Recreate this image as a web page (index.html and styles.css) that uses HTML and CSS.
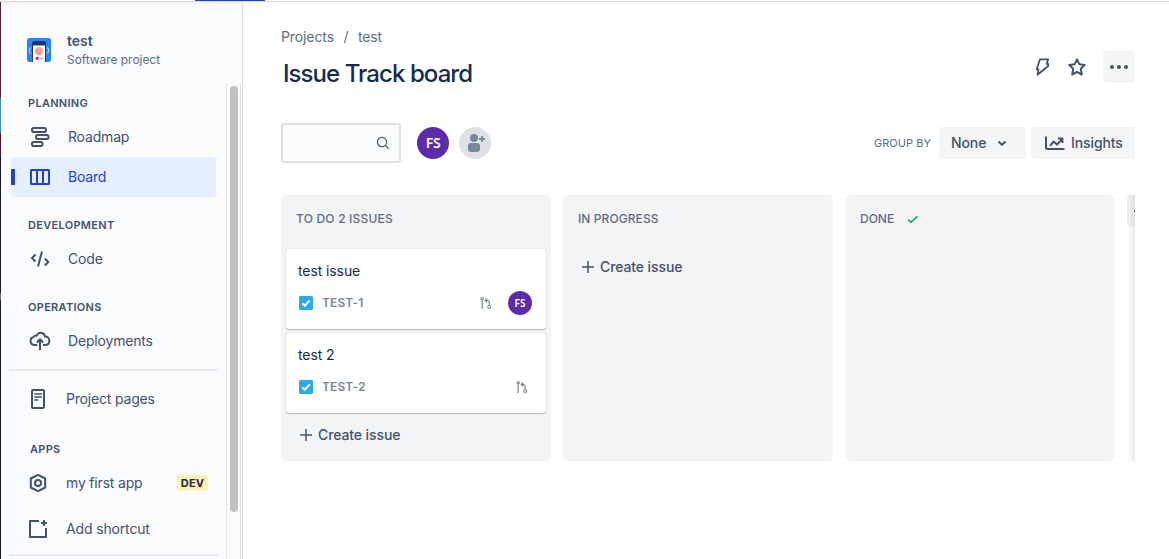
FILE: index.html
```html
<!DOCTYPE html>
<html lang="en">
<head>
<meta charset="utf-8">
<title>Issue Track board</title>
<link rel="stylesheet" href="styles.css">
</head>
<body>
<div class="topbar"><span class="topbar-tab"></span></div>
<div class="app">
  <div class="desktop-edge"></div>
  <aside class="sidebar">
    <header class="project">
      <svg class="project-logo" width="24" height="24" viewBox="0 0 24 24">
        <rect width="24" height="24" rx="2.500" fill="#2684ff"/>
        <path d="M5 24V5.500Q5 3 7.500 3h9Q19 3 19 5.500V24z" fill="#253858"/>
        <path d="M6 7.500h12v16.500h-12z" fill="#fff"/>
        <circle cx="12" cy="13.300" r="4.300" fill="#ffab9b"/>
        <path d="M9.500 12.600h1.500M13 12.600h1.500M10.500 14.500l1.500.8 1.500-.8" stroke="#c4605a" stroke-width=".7" fill="none"/>
        <rect x="8.700" y="19" width="2.800" height="2.800" rx=".5" fill="#f5193d"/>
        <rect x="13" y="19" width="2.800" height="2.800" rx=".5" fill="#a9cdf8"/>
        <path d="M3.700 9.500Q1 12.500 3.700 15.500M20.300 9.500Q23 12.500 20.300 15.500" stroke="#b3d4ff" stroke-width="1.200" fill="none"/>
      </svg>
      <div class="project-text">
        <div class="project-name">test</div>
        <div class="project-type">Software project</div>
      </div>
    </header>
    <div class="nav-scroll">
      <nav class="nav">
        <h2 class="nav-heading">PLANNING</h2>
        <a class="nav-item"><svg class="icon" viewBox="0 0 24 24"><g class="stroke"><rect x="4" y="3" width="14" height="4" rx="1.800"/><rect x="8" y="10" width="12.500" height="4" rx="1.800"/><rect x="4" y="17" width="10.500" height="4" rx="1.800"/></g></svg><span>Roadmap</span></a>
        <a class="nav-item nav-item-active"><svg class="icon" viewBox="0 0 24 24"><rect class="stroke" x="3" y="5" width="18" height="14" rx=".5"/><path class="stroke" d="M9 5v14M15 5v14"/></svg><span>Board</span></a>
        <h2 class="nav-heading gap">DEVELOPMENT</h2>
        <a class="nav-item"><svg class="icon" viewBox="0 0 24 24"><path class="stroke" d="M7.500 7.500L4 11l3.500 3.500M14 4.500L10 19.500M16.800 11.500l3.500 3.500-3.500 3.500"/></svg><span>Code</span></a>
        <h2 class="nav-heading gap">OPERATIONS</h2>
        <a class="nav-item"><svg class="icon" viewBox="0 0 24 24"><path class="stroke" d="M9.200 16H6.500a4 4 0 0 1-.8-7.900C6.500 6.500 8 6.300 8.800 6.600 10 4.200 12 3.500 13.800 4c2 .5 3 2 3.200 3.600 2.500 0 4.300 1.800 4.300 4.200 0 2.500-1.800 4.200-4.200 4.200H15M12 21V10.500M8.800 13.500L12 10.300l3.200 3.200"/></svg><span>Deployments</span></a>
        <hr class="divider">
        <a class="nav-item nudged"><svg class="icon" viewBox="0 0 24 24"><rect class="stroke" x="6" y="3" width="12" height="18" rx="1"/><path class="stroke thin" d="M8.300 7h7.700M8.300 10h7.700M8.300 13h4"/></svg><span>Project pages</span></a>
        <h2 class="nav-heading gap nudged-heading">APPS</h2>
        <a class="nav-item nudged"><svg class="icon" viewBox="0 0 24 24"><path class="stroke" d="M12 3.800l7.200 3.700v9L12 20.200l-7.200-3.700v-9z"/><circle class="stroke" cx="12" cy="12" r="3"/></svg><span>my first app</span><b class="dev">DEV</b></a>
        <a class="nav-item nudged shortcut"><svg class="icon" viewBox="0 0 24 24"><path class="stroke" d="M13 4H4v16h16v-9"/><path class="stroke" d="M18 3v6M15 6h6"/></svg><span>Add shortcut</span></a>
        <hr class="divider last">
      </nav>
      <div class="scrollbar"><div class="thumb"></div></div>
    </div>
  </aside>
  <main class="main">
    <div class="crumbs"><span>Projects</span><span>/</span><span>test</span></div>
    <div class="title-row">
      <h1 class="title">Issue Track board</h1>
      <div class="actions">
        <svg width="20" height="20" viewBox="0 0 20 20"><path class="stroke bolt" d="M8 2.300h8.200l-1.500 4.500h1.500V9L5.500 17.800l1-5.500H4.700z"/></svg>
        <svg width="20" height="20" viewBox="0 0 20 20"><path class="stroke" d="M10 2.300l2.300 4.900 5.500.7-4 3.900 1 5.700L10 14.900l-4.800 2.600 1-5.700-4-3.900 5.500-.7z"/></svg>
        <button class="btn more"><svg width="20" height="6" viewBox="0 0 20 6"><circle cx="3" cy="3" r="2"/><circle cx="10" cy="3" r="2"/><circle cx="17" cy="3" r="2"/></svg></button>
      </div>
    </div>
    <div class="toolbar">
      <div class="search"><svg width="14" height="14" viewBox="0 0 14 14"><circle class="stroke slim" cx="6" cy="6" r="4.600"/><path class="stroke slim" d="M9.400 9.400l3.400 3.400"/></svg></div>
      <span class="avatar"><span>FS</span></span>
      <span class="avatar add"><svg width="20" height="20" viewBox="0 0 20 20"><circle cx="8" cy="5" r="4"/><rect x="2" y="10" width="12" height="9" rx="3"/><path d="M16 3v6M13 6h6" stroke="#7a869a" stroke-width="1.800"/></svg></span>
      <span class="group-label">GROUP BY</span>
      <button class="btn none"><span>None</span><svg width="10" height="8" viewBox="0 0 10 8"><path class="stroke" d="M1.500 2.500L5 5.800l3.500-3.300"/></svg></button>
      <button class="btn insights"><svg width="20" height="16" viewBox="0 0 20 16"><path class="stroke" d="M1 1.500v11q0 1.500 1.500 1.500H19.500M5 10.800l3.500-4.200 3.500 3 5-5.500M12.800 3.500h4.600V8"/></svg><span>Insights</span></button>
    </div>
    <div class="columns">
      <section class="column">
        <h3 class="column-title title-todo">TO DO 2 ISSUES</h3>
        <article class="card">
          <div class="card-title">test issue</div>
          <div class="card-foot"><svg class="task" viewBox="0 0 14 14"><rect width="14" height="14" rx="1.500" fill="#2aa9ec"/><path d="M3.300 7.200l2.500 2.500 4.900-5.300" stroke="#fff" stroke-width="2" fill="none"/></svg><span class="key">TEST-1</span>
            <svg class="pr" viewBox="0 0 14 14"><circle cx="3.200" cy="2.700" r="1.200"/><path d="M3.200 4v9M10.200 9.500V6q0-1.500-1.500-1.500H6.500M8.200 2.500l-2 2 2 2"/><circle cx="10.200" cy="11" r="1.500"/></svg>
            <span class="avatar small"><span>FS</span></span></div>
        </article>
        <article class="card">
          <div class="card-title">test 2</div>
          <div class="card-foot"><svg class="task" viewBox="0 0 14 14"><rect width="14" height="14" rx="1.500" fill="#2aa9ec"/><path d="M3.300 7.200l2.500 2.500 4.900-5.300" stroke="#fff" stroke-width="2" fill="none"/></svg><span class="key">TEST-2</span>
            <svg class="pr pr-end" viewBox="0 0 14 14"><circle cx="3.200" cy="2.700" r="1.200"/><path d="M3.200 4v9M10.200 9.500V6q0-1.500-1.500-1.500H6.500M8.200 2.500l-2 2 2 2"/><circle cx="10.200" cy="11" r="1.500"/></svg></div>
        </article>
        <div class="create"><svg width="12" height="12" viewBox="0 0 12 12"><path d="M6 0v12M0 6h12"/></svg><span>Create issue</span></div>
      </section>
      <section class="column">
        <h3 class="column-title title-progress">IN PROGRESS</h3>
        <div class="create"><svg width="12" height="12" viewBox="0 0 12 12"><path d="M6 0v12M0 6h12"/></svg><span>Create issue</span></div>
      </section>
      <section class="column">
        <h3 class="column-title"><span>DONE</span><svg width="12" height="10" viewBox="0 0 12 10"><path d="M1 5.500l3 2.800 6.500-6" stroke="#00a06b" stroke-width="1.500" fill="none"/></svg></h3>
      </section>
      <div class="add-column"><div class="add-button"><i></i></div></div>
    </div>
  </main>
</div>
</body>
</html>
```

FILE: styles.css
```css
* { box-sizing: border-box; }
body { margin: 0; width: 1169px; height: 559px; overflow: hidden; display: flex; flex-direction: column; background: #fff; color: #42526e; font: 14px/20px Inter, "Liberation Sans", sans-serif; letter-spacing: -.1px; }
h1, h2, h3 { margin: 0; }
svg { flex: none; display: block; }
.stroke { fill: none; stroke: currentColor; stroke-width: 2; stroke-linejoin: round; }
.stroke.thin { stroke-width: 1.700; }
.stroke.slim { stroke-width: 1.200; }
.stroke.bolt { stroke-width: 1.800; }

.topbar { height: 2px; flex: none; padding-left: 195px; border-bottom: 1px solid #d9dbe0; }
.topbar-tab { display: block; width: 70px; height: 1px; background: #1d3fd0; }
.app { flex: 1; min-height: 0; display: flex; }
.desktop-edge { width: 1px; background: linear-gradient(#572429 0 95px, #3b91b1 97px 130px, #57151f 132px 152px, #171525 154px 290px, #777 292px 297px, #101820 299px); }

.sidebar { width: 242px; display: flex; flex-direction: column; background: #fafbfc; border-right: 1px solid #dfe0e4; box-shadow: inset 0 3px 3px -2px #0000000f; }
.project { height: 81px; flex: none; display: flex; gap: 16px; padding: 30px 0 0 26px; }
.project-logo { margin-top: 6px; }
.project-name { font-weight: 600; line-height: 18px; letter-spacing: 0; }
.project-type { padding-top: 1px; font-size: 12px; line-height: 18px; color: #5e6c84; letter-spacing: -.05px; }
.nav-scroll { flex: 1; min-height: 0; display: flex; }
.nav { width: 225px; padding: 10px 10px 0; overflow: hidden; }
.nav-heading { height: 20px; margin-bottom: 4px; padding-left: 17px; font-size: 11px; line-height: 20px; font-weight: 600; letter-spacing: .3px; }
.nav-heading.gap { margin-top: 18px; }
.nav-heading.nudged-heading { margin-top: 20px; padding-left: 19px; }
.nav-item { height: 40px; display: flex; align-items: center; gap: 16px; padding-left: 17px; border-radius: 3px; letter-spacing: -.18px; }
.nav-item > .icon { width: 24px; height: 24px; }
.nav-item-active { color: #1d43cf; background: linear-gradient(#1d43cf, #1d43cf) 0 12px / 4px 16px no-repeat #e5efff; }
.nav-item.nudged { padding-left: 15px; }
.nav-item.shortcut { margin-top: 6px; letter-spacing: -.15px; }
.divider { height: 2px; margin: 8px 0 8px -2px; width: 209px; border: 0; background: #e8eaef; }
.divider.last { margin: 5px 0 0 -2px; }
.dev { width: 31px; height: 16px; margin-left: auto; margin-right: 8px; border-radius: 3px; background: #fff0b3; color: #172b4d; font-size: 11px; line-height: 16px; font-weight: 700; letter-spacing: .2px; text-align: center; }
.scrollbar { width: 15px; border: solid #e4e5e7; border-width: 0 1px; padding: 3px 0 0 3px; }
.thumb { width: 8px; height: 426px; border-radius: 4px; background: #c1c1c1; }

.main { width: 892px; padding: 25px 0 0 38px; }
.crumbs { display: flex; gap: 9.500px; color: #5e6c84; }
.title-row { width: 854px; height: 32px; margin-top: 4px; display: flex; align-items: center; justify-content: space-between; }
.title { padding: 14px 0 0 2px; font-size: 24px; line-height: 32px; font-weight: 500; color: #172b4d; letter-spacing: -.93px; }
.actions { display: flex; align-items: center; gap: 15px; }
.btn { height: 32px; padding: 0; border: 0; border-radius: 3px; background: #f4f5f7; color: #42526e; font: 500 14px/20px Inter, sans-serif; letter-spacing: -.1px; display: flex; align-items: center; }
.more { width: 32px; margin-left: 1px; justify-content: center; }
.more svg { fill: currentColor; }
.toolbar { width: 854px; height: 40px; margin-top: 40px; display: flex; align-items: center; }
.search { width: 120px; height: 40px; padding-right: 9px; border: 2px solid #dfe1e6; border-radius: 3px; background: #fafbfc; display: flex; align-items: center; justify-content: flex-end; }
.avatar { width: 32px; height: 32px; margin-left: 16px; border-radius: 50%; background: #5d2caa; color: #fff; font: 600 14px/32px "Noto Sans", sans-serif; letter-spacing: -.3px; text-align: center; }
.avatar.add { margin-left: 10px; display: flex; align-items: center; justify-content: center; background: #dfe1e6; }
.avatar.add svg { fill: #7a869a; margin-left: 2px; }
.group-label { margin-left: auto; margin-right: 8px; font-size: 11px; color: #5e6c84; letter-spacing: .05px; }
.none { width: 87px; padding-left: 12px; gap: 11px; margin-right: 5px; }
.insights { width: 104px; padding-left: 14px; gap: 6px; }

.columns { width: 854px; height: 266px; margin-top: 32px; display: flex; gap: 12px; overflow: hidden; }
.column { width: 270px; flex: none; padding: 0 5px; border-radius: 5px; background: #f3f4f6; }
.column-title { height: 54px; padding: 4px 10px 10px; display: flex; align-items: center; gap: 13px; font-size: 12px; font-weight: 500; color: #5e6c84; letter-spacing: 0; }
.title-todo { letter-spacing: .2px; }
.title-progress { letter-spacing: .08px; }
.card { height: 80px; margin-bottom: 4px; padding: 12px 14px 0 12px; background: #fff; border-radius: 3px; box-shadow: 0 1px 1px #091e4240, 0 0 1px #091e4240; color: #172b4d; }
.card-foot { height: 24px; margin-top: 10px; padding-left: 1px; display: flex; align-items: center; }
.task { width: 14px; height: 14px; }
.key { margin-left: 9px; font-size: 12px; font-weight: 600; color: #7a869a; letter-spacing: .1px; }
.pr { width: 14px; height: 14px; margin-left: auto; margin-right: 1px; fill: none; stroke: #7a869a; stroke-width: 1.200; }
.pr-end { margin-right: 3px; }
.avatar.small { width: 24px; height: 24px; margin-left: 14px; font-size: 10px; line-height: 24px; letter-spacing: 0; }
.create { height: 36px; padding-left: 14px; display: flex; align-items: center; gap: 6px; font-weight: 500; }
.create svg { stroke: currentColor; stroke-width: 1.500; fill: none; }
.add-column { width: 8px; flex: none; background: linear-gradient(90deg, #fff, #ebecf0); }
.add-button { height: 32px; display: flex; justify-content: flex-end; padding-top: 15px; border-radius: 3px 0 0 3px; background: linear-gradient(90deg, #f1f2f4, #e0e2e7); }
.add-button i { width: 1px; height: 2px; background: #42526e; }
```
